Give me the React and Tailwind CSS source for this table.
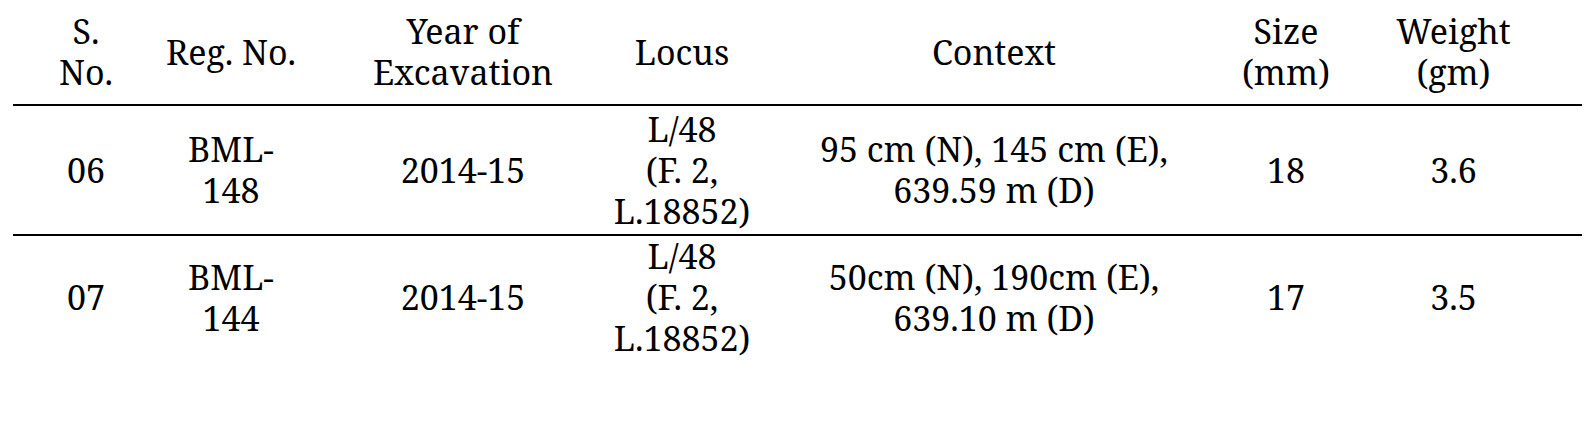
import React from 'react'

const cols = 'grid w-[1569px] grid-cols-[146px_144px_320px_118px_506px_78px_257px]'

const header = [
  ['S.', 'No.'],
  ['Reg. No.'],
  ['Year of', 'Excavation'],
  ['Locus'],
  ['Context'],
  ['Size', '(mm)'],
  ['Weight', '(gm)'],
]

const rows = [
  [['06'], ['BML-', '148'], ['2014-15'], ['L/48', '(F. 2,', 'L.18852)'], ['95 cm (N), 145 cm (E),', '639.59 m (D)'], ['18'], ['3.6']],
  [['07'], ['BML-', '144'], ['2014-15'], ['L/48', '(F. 2,', 'L.18852)'], ['50cm (N), 190cm (E),', '639.10 m (D)'], ['17'], ['3.5']],
]

const Cell = ({ lines }) => (
  <div className="flex flex-col items-center justify-center">
    {lines.map((l, i) => (
      <span key={i} className="whitespace-nowrap">{l}</span>
    ))}
  </div>
)

export default function App() {
  return (
    <div className="w-[1593px] h-[435px] bg-white text-black font-['Noto_Serif'] text-[34px] leading-[41px] pl-[13px]">
      {/* header */}
      <div className={`${cols} h-[106px] border-b-2 border-black`}>
        {header.map((h, i) => (
          <Cell key={i} lines={h} />
        ))}
      </div>

      {/* row 06 */}
      <div className={`${cols} h-[130px] border-b-2 border-black`}>
        {rows[0].map((c, i) => (
          <Cell key={i} lines={c} />
        ))}
      </div>

      {/* row 07 */}
      <div className={`${cols} h-[122px]`}>
        {rows[1].map((c, i) => (
          <Cell key={i} lines={c} />
        ))}
      </div>
    </div>
  )
}
